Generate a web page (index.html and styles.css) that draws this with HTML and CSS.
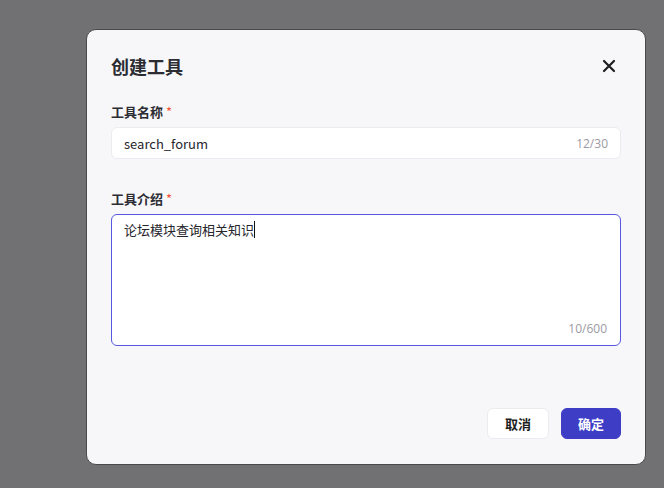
FILE: index.html
```html
<!DOCTYPE html>
<html>
<head>
  <meta charset="utf-8">
  <link rel="stylesheet" href="styles.css">
</head>
<body>
  <div class="mask">
    <div class="modal">
      <div class="modal-header">
        <h2>创建工具</h2>
        <span class="close-btn">
          <svg width="14" height="14" viewBox="0 0 14 14"><path d="M2 2L12 12M12 2L2 12" stroke="#1d1d22" stroke-width="2.2" stroke-linecap="round"/></svg>
        </span>
      </div>

      <div class="form-item">
        <div class="form-label">工具名称 <span class="required">*</span></div>
        <div class="text-input">
          <span class="value">search_forum</span>
          <span class="counter">12/30</span>
        </div>
      </div>

      <div class="form-item">
        <div class="form-label">工具介绍 <span class="required">*</span></div>
        <div class="text-area focused">
          <span class="value">论坛模块查询相关知识</span><span class="caret"></span>
          <span class="counter area-counter">10/600</span>
        </div>
      </div>

      <div class="modal-footer">
        <button class="btn btn-default">取消</button>
        <button class="btn btn-primary">确定</button>
      </div>
    </div>
  </div>
</body>
</html>
```

FILE: styles.css
```css
body {
  margin: 0;
  width: 664px;
  height: 488px;
  overflow: hidden;
  background: #717173;
  font-family: "Noto Sans CJK SC", "Noto Sans", sans-serif;
  color: #1d1d22;
}

.mask {
  padding: 29px 0 0 86px;
}

.modal {
  width: 560px;
  height: 436px;
  box-sizing: border-box;
  padding: 22px 24px 0 24px;
  background: #f7f7f9;
  border: 1px solid #4a4a4e;
  border-radius: 10px;
}

.modal-header {
  display: flex;
  justify-content: space-between;
  align-items: center;
  height: 28px;
  margin-bottom: 22px;
}

h2 {
  margin: 0;
  font-size: 18px;
  font-weight: 700;
  color: #2c2c33;
}

.close-btn {
  display: flex;
  width: 14px;
  height: 14px;
  margin-right: 5px;
}

.form-item {
  margin-bottom: 30px;
}

.form-label {
  font-size: 13px;
  font-weight: 700;
  line-height: 20px;
  color: #2c2c33;
  margin-bottom: 5px;
}

.required {
  color: #f5533d;
  font-weight: 400;
}

.text-input {
  display: flex;
  align-items: center;
  justify-content: space-between;
  height: 32px;
  box-sizing: border-box;
  padding: 0 12px;
  background: #fff;
  border: 1px solid #ececf0;
  border-radius: 6px;
  font-size: 13px;
}

.value {
  color: #26262c;
}

.counter {
  font-size: 12px;
  color: #9a9aa3;
  font-family: "Open Sans", "Noto Sans", sans-serif;
}

.text-area {
  position: relative;
  height: 132px;
  box-sizing: border-box;
  padding: 5px 12px;
  background: #fff;
  border: 1px solid #5757e0;
  border-radius: 6px;
  font-size: 13px;
  line-height: 20px;
}

.caret {
  display: inline-block;
  width: 1px;
  height: 17px;
  background: #111;
  vertical-align: -3px;
}

.area-counter {
  position: absolute;
  right: 13px;
  bottom: 7px;
  line-height: 18px;
}

.modal-footer {
  display: flex;
  justify-content: flex-end;
  gap: 12px;
  margin-top: 62px;
}

.btn {
  height: 31px;
  border-radius: 6px;
  font-family: "Noto Sans CJK SC", sans-serif;
  font-size: 13px;
  font-weight: 700;
  cursor: pointer;
}

.btn-default {
  padding: 0 17px;
  background: #fff;
  border: 1px solid #ececf0;
  color: #1d1d22;
}

.btn-primary {
  padding: 0 16px;
  background: #3d3dc6;
  border: 1px solid #3d3dc6;
  color: #fff;
}
```
